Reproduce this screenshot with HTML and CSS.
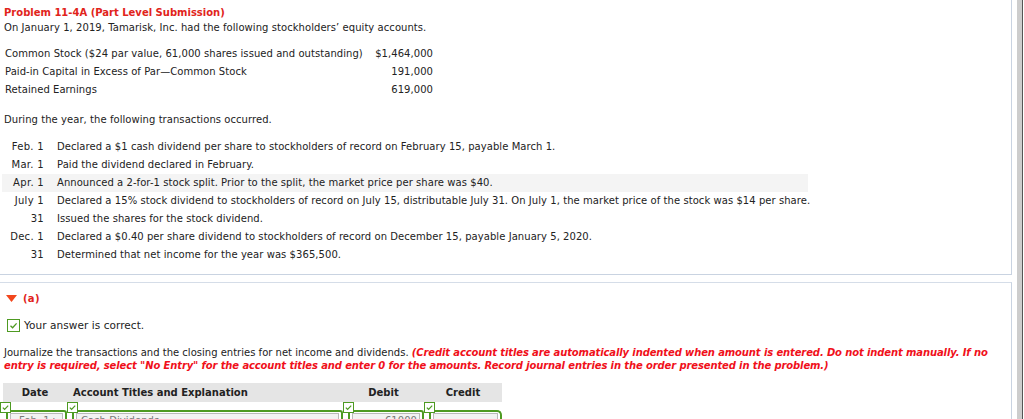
FILE: index.html
```html
<!DOCTYPE html>
<html>
  <head>
    <title>Problem 11-4A</title>
    <meta name="viewport" content="width=device-width, initial-scale=1.0" />
    <link rel="stylesheet" href="styles.css">
  </head>
  <body>
    <div class="page">
      <div class="main">
        <div class="panel panel-problem">
          <h1 class="problem-title">Problem 11-4A (Part Level Submission)</h1>
          <p class="text-line">On January 1, 2019, Tamarisk, Inc. had the following stockholders’ equity accounts.</p>

          <table class="equity-table">
            <tr>
              <td class="label">Common Stock ($24 par value, 61,000 shares issued and outstanding)</td>
              <td class="amount">$1,464,000</td>
            </tr>
            <tr>
              <td class="label">Paid-in Capital in Excess of Par—Common Stock</td>
              <td class="amount">191,000</td>
            </tr>
            <tr>
              <td class="label">Retained Earnings</td>
              <td class="amount">619,000</td>
            </tr>
          </table>

          <p class="text-line during">During the year, the following transactions occurred.</p>

          <table class="txn-table">
            <tr>
              <td class="txn-date">Feb. 1</td>
              <td class="txn-desc">Declared a $1 cash dividend per share to stockholders of record on February 15, payable March 1.</td>
            </tr>
            <tr>
              <td class="txn-date">Mar. 1</td>
              <td class="txn-desc">Paid the dividend declared in February.</td>
            </tr>
            <tr class="shaded">
              <td class="txn-date">Apr. 1</td>
              <td class="txn-desc">Announced a 2-for-1 stock split. Prior to the split, the market price per share was $40.</td>
            </tr>
            <tr>
              <td class="txn-date">July 1</td>
              <td class="txn-desc">Declared a 15% stock dividend to stockholders of record on July 15, distributable July 31. On July 1, the market price of the stock was $14 per share.</td>
            </tr>
            <tr>
              <td class="txn-date">31</td>
              <td class="txn-desc">Issued the shares for the stock dividend.</td>
            </tr>
            <tr>
              <td class="txn-date">Dec. 1</td>
              <td class="txn-desc">Declared a $0.40 per share dividend to stockholders of record on December 15, payable January 5, 2020.</td>
            </tr>
            <tr>
              <td class="txn-date">31</td>
              <td class="txn-desc">Determined that net income for the year was $365,500.</td>
            </tr>
          </table>
        </div>

        <div class="panel panel-part">
          <div class="part-head">
            <svg class="caret" width="11" height="7" viewBox="0 0 11 7"><polygon points="0,0 11,0 5.5,7" fill="#f2461c"/></svg>
            <span class="part-label">(a)</span>
          </div>

          <div class="correct">
            <span class="correct-box">
              <svg width="11" height="11" viewBox="0 0 11 11"><polyline points="2.5,5.8 4.6,7.8 8.6,3.4" fill="none" stroke="#4e9a22" stroke-width="1.3"/></svg>
            </span>
            Your answer is correct.
          </div>

          <p class="instructions">Journalize the transactions and the closing entries for net income and dividends. <em class="note">(Credit account titles are automatically indented when amount is entered. Do not indent manually. If no entry is required, select "No Entry" for the account titles and enter 0 for the amounts. Record journal entries in the order presented in the problem.)</em></p>

          <table class="journal">
            <thead>
              <tr>
                <th class="col-date">Date</th>
                <th class="col-account">Account Titles and Explanation</th>
                <th class="col-debit">Debit</th>
                <th class="col-credit">Credit</th>
              </tr>
            </thead>
            <tbody>
              <tr>
                <td class="cell cell-date">
                  <span class="badge"><svg width="9" height="9" viewBox="0 0 9 9"><polyline points="1.8,4.6 3.6,6.3 7.2,2.6" fill="none" stroke="#4e9a22" stroke-width="1.2"/></svg></span>
                  <div class="field-wrap"><div class="field select">Feb. 1<span class="arrow">▲</span></div></div>
                </td>
                <td class="cell cell-account">
                  <span class="badge"><svg width="9" height="9" viewBox="0 0 9 9"><polyline points="1.8,4.6 3.6,6.3 7.2,2.6" fill="none" stroke="#4e9a22" stroke-width="1.2"/></svg></span>
                  <div class="field-wrap"><div class="field">Cash Dividends</div></div>
                </td>
                <td class="cell cell-debit">
                  <span class="badge"><svg width="9" height="9" viewBox="0 0 9 9"><polyline points="1.8,4.6 3.6,6.3 7.2,2.6" fill="none" stroke="#4e9a22" stroke-width="1.2"/></svg></span>
                  <div class="field-wrap"><div class="field num">61000</div></div>
                </td>
                <td class="cell cell-credit">
                  <span class="badge"><svg width="9" height="9" viewBox="0 0 9 9"><polyline points="1.8,4.6 3.6,6.3 7.2,2.6" fill="none" stroke="#4e9a22" stroke-width="1.2"/></svg></span>
                  <div class="field-wrap last"><div class="field num"></div></div>
                </td>
              </tr>
            </tbody>
          </table>
        </div>
      </div>
      <div class="scrollbar"></div>
    </div>
  </body>
</html>
```

FILE: styles.css
```css
body {
  font-family: "DejaVu Sans", Verdana, sans-serif;
  font-size: 10px;
  letter-spacing: 0.06px;
  color: #222;
  background-color: #fff;
  margin: 0;
  padding: 0;
  overflow: hidden;
}

.page {
  display: flex;
  width: 1024px;
  height: 419px;
  overflow: hidden;
}

.main {
  width: 1012px;
  flex-shrink: 0;
}

.panel {
  background-color: #fff;
  border-right: 1px solid #c9d3e1;
}

.panel-problem {
  padding: 5px 0 10px 4px;
  border-bottom: 1px solid #c9d3e1;
  margin-bottom: 7px;
}

.panel-part {
  border-top: 1px solid #d5dde8;
  padding: 7px 0 0 4px;
  height: 200px;
}

.problem-title {
  font-size: 10px;
  font-weight: bold;
  letter-spacing: 0;
  color: #e1241b;
  line-height: 15px;
  margin: 0;
}

.text-line {
  margin: 0;
  line-height: 16px;
}

.text-line.during {
  margin-top: 13px;
}

.equity-table {
  border-collapse: collapse;
  table-layout: fixed;
  margin-top: 9px;
  margin-left: 1px;
  width: 428px;
}

.equity-table td {
  padding: 0;
  height: 18px;
  line-height: 18px;
  white-space: nowrap;
}

.equity-table .label {
  width: 360px;
}

.equity-table .amount {
  width: 68px;
  text-align: right;
}

.txn-table {
  border-collapse: collapse;
  table-layout: fixed;
  margin-top: 10px;
  margin-left: -2px;
  width: 806px;
}

.txn-table td {
  padding: 0;
  height: 18px;
  line-height: 18px;
  white-space: nowrap;
}

.txn-table .shaded td {
  background-color: #f4f4f4;
}

.txn-date {
  width: 42px;
  padding-right: 6px !important;
  text-align: right;
  letter-spacing: 0.3px;
}

.txn-desc {
  padding-left: 7px !important;
}

.part-head {
  display: flex;
  align-items: center;
  height: 16px;
  margin-left: 2px;
}

.caret {
  margin-right: 6px;
  margin-top: 1px;
}

.part-label {
  font-weight: bold;
  letter-spacing: 0.3px;
  color: #e1241b;
}

.correct {
  display: flex;
  align-items: center;
  height: 16px;
  margin-top: 11px;
  margin-left: 3px;
  font-size: 10.5px;
}

.correct-box {
  display: inline-block;
  width: 11px;
  height: 11px;
  border: 1px solid #4e9a22;
  margin-right: 4px;
}

.correct-box svg {
  display: block;
}

.instructions {
  margin: 13px 0 0 0;
  line-height: 13px;
  width: 992px;
  letter-spacing: 0.01px;
}

.note {
  font-weight: bold;
  letter-spacing: -0.12px;
  color: #f0101a;
}

.journal {
  border-collapse: collapse;
  table-layout: fixed;
  margin-top: 11px;
  margin-left: -1px;
  width: 499px;
}

.journal th {
  background-color: #e5e5e5;
  height: 19px;
  padding: 0;
  font-weight: bold;
  letter-spacing: 0;
  color: #222;
}

.col-date {
  width: 64px;
  text-align: center;
}

.col-account {
  width: 270px;
  text-align: left;
  padding-left: 6px !important;
}

.col-debit {
  width: 81px;
  text-align: center;
}

.col-credit {
  text-align: center;
}

.cell {
  position: relative;
  padding: 8px 0 0 5px;
  vertical-align: top;
}

.cell-date {
  padding-left: 3px;
}

.badge {
  position: absolute;
  top: 0;
  left: 0;
  width: 9px;
  height: 9px;
  border: 1px solid #4e9a22;
  background-color: #fff;
  z-index: 2;
}

.cell-date .badge {
  left: -3px;
}

.badge svg {
  display: block;
}

.field-wrap {
  border: 2px solid #4e9a22;
  border-bottom: none;
  border-radius: 3px 3px 0 0;
  padding: 1px 2px 0 2px;
  height: 22px;
}

.field-wrap.last {
  border-radius: 3px 5px 0 0;
}

.field {
  border: 1px solid #b9b9b9;
  background-color: #f2f2f2;
  height: 18px;
  line-height: 14px;
  padding: 0 4px;
  color: #777;
  white-space: nowrap;
  overflow: hidden;
  position: relative;
}

.field.select {
  padding-left: 8px;
}

.arrow {
  position: absolute;
  right: 5px;
  top: 0;
  font-size: 8px;
  color: #555;
}

.field.num {
  text-align: right;
  padding-right: 2px;
}

.scrollbar {
  width: 5px;
  margin-left: 5px;
  background-color: #cdcdcd;
  border-right: 1px solid #555;
  flex-shrink: 0;
}
```
